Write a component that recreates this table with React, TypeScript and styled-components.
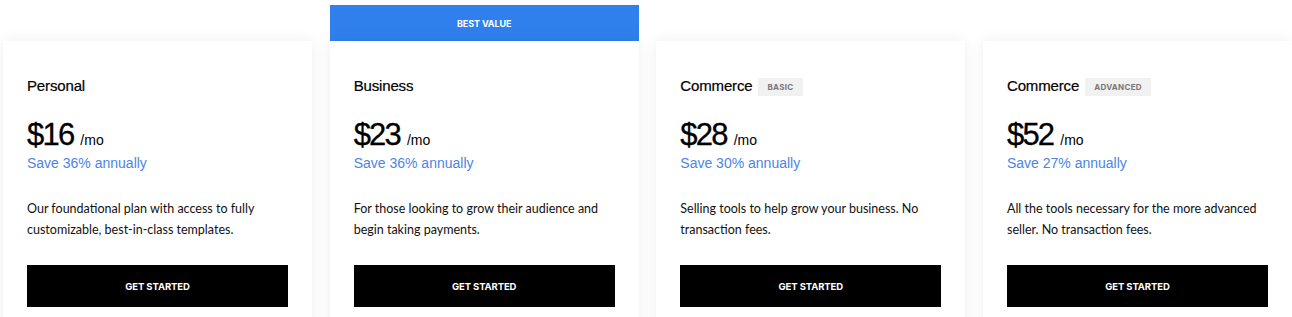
import React from 'react';
import styled, { createGlobalStyle } from 'styled-components';

const GlobalStyle = createGlobalStyle`
  html, body {
    margin: 0;
    padding: 0;
    background: #fff;
    overflow: hidden;
  }
  body {
    font-family: "Liberation Sans", Arial, sans-serif;
    color: #000;
  }
`;

const Plans = styled.div`
  display: grid;
  grid-template-columns: repeat(4, 309px);
  column-gap: 17.67px;
  padding: 5px 0 0 3px;
  width: 1400px;
`;

const Column = styled.div`
  display: flex;
  flex-direction: column;
`;

const Banner = styled.div<{ visible: boolean }>`
  height: 36px;
  display: flex;
  align-items: center;
  justify-content: center;
  background: ${p => (p.visible ? '#2f80ed' : 'transparent')};
  color: #fff;
  font-family: Inter, "Liberation Sans", sans-serif;
  font-size: 9px;
  font-weight: 700;
  letter-spacing: -0.1px;
`;

const Card = styled.div`
  background: #fff;
  box-shadow: 0 0 14px rgba(0, 0, 0, 0.07);
  padding: 34px 24px 24px;
  height: 320px;
  box-sizing: border-box;
`;

const TitleRow = styled.div`
  display: flex;
  align-items: center;
  gap: 6px;
  height: 22px;
  margin-top: -1px;
`;

const Title = styled.div`
  font-size: 15px;
  font-weight: 400;
  letter-spacing: -0.15px;
  color: #000;
  -webkit-text-stroke: 0.2px #000;
`;

const Badge = styled.span`
  display: inline-flex;
  align-items: center;
  height: 18px;
  margin-top: 4px;
  padding: 0 9px;
  background: #f1f1f1;
  color: #777;
  font-family: Inter, "Liberation Sans", sans-serif;
  font-size: 8px;
  font-weight: 700;
  letter-spacing: 0.3px;
`;

const PriceRow = styled.div`
  display: flex;
  align-items: baseline;
  gap: 7px;
  margin-top: 21px;
  height: 36px;
`;

const Amount = styled.span`
  font-size: 31px;
  font-weight: 400;
  letter-spacing: -1.8px;
  line-height: 36px;
  -webkit-text-stroke: 0.3px #000;
`;

const Per = styled.span`
  font-size: 14px;
  font-weight: 400;
`;

const Save = styled.div`
  color: #4c84e6;
  font-size: 14px;
  line-height: 20px;
  margin-top: 0;
`;

const Description = styled.p`
  margin: 25px 0 0;
  font-family: Lato, "Liberation Sans", sans-serif;
  font-size: 12.5px;
  line-height: 21px;
  color: #111;
  height: 42px;
`;

const Button = styled.button`
  display: flex;
  align-items: center;
  justify-content: center;
  width: 100%;
  height: 42px;
  margin-top: 25px;
  border: 0;
  background: #000;
  color: #fff;
  font-family: Inter, "Liberation Sans", sans-serif;
  font-size: 9.5px;
  font-weight: 700;
  letter-spacing: -0.1px;
  cursor: pointer;
`;

type Plan = {
  name: string;
  badge?: string;
  price: string;
  save: string;
  text: string;
  featured?: boolean;
};

const plans: Plan[] = [
  {
    name: 'Personal',
    price: '$16',
    save: 'Save 36% annually',
    text: 'Our foundational plan with access to fully customizable, best-in-class templates.',
  },
  {
    name: 'Business',
    price: '$23',
    save: 'Save 36% annually',
    text: 'For those looking to grow their audience and begin taking payments.',
    featured: true,
  },
  {
    name: 'Commerce',
    badge: 'BASIC',
    price: '$28',
    save: 'Save 30% annually',
    text: 'Selling tools to help grow your business. No transaction fees.',
  },
  {
    name: 'Commerce',
    badge: 'ADVANCED',
    price: '$52',
    save: 'Save 27% annually',
    text: 'All the tools necessary for the more advanced seller. No transaction fees.',
  },
];

export default function App(): JSX.Element {
  return (
    <>
      <GlobalStyle />
      <Plans>
        {plans.map((plan, i) => (
          <Column key={i}>
            <Banner visible={!!plan.featured}>{plan.featured ? 'BEST VALUE' : null}</Banner>
            <Card>
              <TitleRow>
                <Title>{plan.name}</Title>
                {plan.badge && <Badge>{plan.badge}</Badge>}
              </TitleRow>
              <PriceRow>
                <Amount>{plan.price}</Amount>
                <Per>/mo</Per>
              </PriceRow>
              <Save>{plan.save}</Save>
              <Description>{plan.text}</Description>
              <Button>GET STARTED</Button>
            </Card>
          </Column>
        ))}
      </Plans>
    </>
  );
}
